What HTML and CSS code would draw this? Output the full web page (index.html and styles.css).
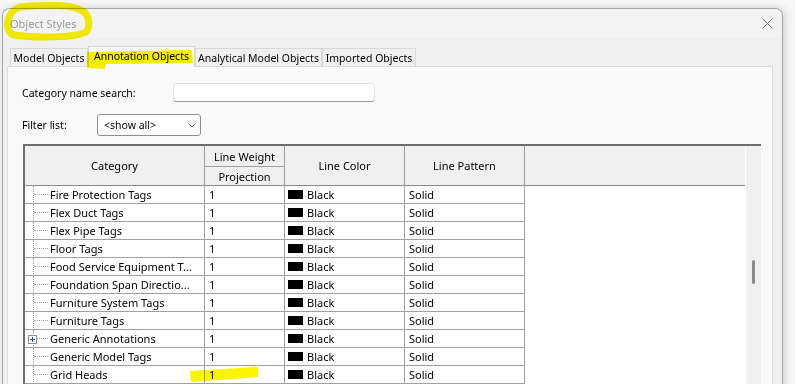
FILE: index.html
```html
<!DOCTYPE html>
<html>
<head>
<meta charset="utf-8">
<link rel="stylesheet" href="styles.css">
</head>
<body>
<div class="dialog">
  <div class="titlebar">
    <span class="title">Object Styles</span>
    <svg class="close" viewBox="0 0 11 11" width="11" height="11"><path d="M0.5 0.5 L10.5 10.5 M10.5 0.5 L0.5 10.5" stroke="#6a6a6a" stroke-width="1" fill="none"/></svg>
  </div>
  <div class="dbody">
    <div class="tabs">
      <div class="tab t1">Model Objects</div>
      <div class="tab t2 active">Annotation Objects</div>
      <div class="tab t3">Analytical Model Objects</div>
      <div class="tab t4">Imported Objects</div>
    </div>
    <div class="panel">
      <div class="frow search"><span class="lbl">Category name search:</span><div class="input"></div></div>
      <div class="frow filter"><span class="lbl">Filter list:</span>
        <div class="select"><span>&lt;show all&gt;</span><svg class="chev" viewBox="0 0 8 5" width="8" height="5"><path d="M0.5 0.5 L4 4 L7.5 0.5" stroke="#606060" fill="none" stroke-width="1"/></svg></div>
      </div>
      <div class="grid">
        <div class="gmain">
          <div class="ghead">
            <div class="hc cat">Category</div>
            <div class="hc lw">Line Weight</div>
            <div class="hc proj">Projection</div>
            <div class="hc col">Line Color</div>
            <div class="hc pat">Line Pattern</div>
            <div class="hc rest"></div>
          </div>
          <div class="row"><div class="c name">Fire Protection Tags</div><div class="c w">1</div><div class="c clr"><span class="sw"></span>Black</div><div class="c lp">Solid</div><div class="c e"></div></div>
          <div class="row"><div class="c name">Flex Duct Tags</div><div class="c w">1</div><div class="c clr"><span class="sw"></span>Black</div><div class="c lp">Solid</div><div class="c e"></div></div>
          <div class="row"><div class="c name">Flex Pipe Tags</div><div class="c w">1</div><div class="c clr"><span class="sw"></span>Black</div><div class="c lp">Solid</div><div class="c e"></div></div>
          <div class="row"><div class="c name">Floor Tags</div><div class="c w">1</div><div class="c clr"><span class="sw"></span>Black</div><div class="c lp">Solid</div><div class="c e"></div></div>
          <div class="row"><div class="c name">Food Service Equipment T...</div><div class="c w">1</div><div class="c clr"><span class="sw"></span>Black</div><div class="c lp">Solid</div><div class="c e"></div></div>
          <div class="row"><div class="c name">Foundation Span Directio...</div><div class="c w">1</div><div class="c clr"><span class="sw"></span>Black</div><div class="c lp">Solid</div><div class="c e"></div></div>
          <div class="row"><div class="c name">Furniture System Tags</div><div class="c w">1</div><div class="c clr"><span class="sw"></span>Black</div><div class="c lp">Solid</div><div class="c e"></div></div>
          <div class="row"><div class="c name">Furniture Tags</div><div class="c w">1</div><div class="c clr"><span class="sw"></span>Black</div><div class="c lp">Solid</div><div class="c e"></div></div>
          <div class="row"><div class="c name"><svg class="pb" viewBox="0 0 9 9" width="9" height="9"><rect x="0.5" y="0.5" width="8" height="8" fill="#fff" stroke="#919191"/><path d="M2 4.5 H7 M4.5 2 V7" stroke="#2b4f9e" stroke-width="1"/></svg>Generic Annotations</div><div class="c w">1</div><div class="c clr"><span class="sw"></span>Black</div><div class="c lp">Solid</div><div class="c e"></div></div>
          <div class="row"><div class="c name">Generic Model Tags</div><div class="c w">1</div><div class="c clr"><span class="sw"></span>Black</div><div class="c lp">Solid</div><div class="c e"></div></div>
          <div class="row"><div class="c name">Grid Heads</div><div class="c w">1</div><div class="c clr"><span class="sw"></span>Black</div><div class="c lp">Solid</div><div class="c e"></div></div>
        </div>
        <div class="vscroll"><div class="thumb"></div></div>
      </div>
    </div>
  </div>
</div>
<svg class="marks" viewBox="0 0 795 384" width="795" height="384">
  <path d="M20 7 C50 4 75 5 84 12 C90 17 90 28 86 32 C75 38 35 38 14 35 C4 33 5 12 20 7 Z" fill="none" stroke="#fbf300" stroke-width="7" stroke-linejoin="round"/>
  <path d="M87 52 L192 50 L193 63 L106 64 L105 69 L87 68 Z" fill="#fbf300"/>
  <path d="M190 371 L258 367 L258 377 L191 382 Z" fill="#fbf300"/>
</svg>
</body>
</html>
```
FILE: styles.css
```css
* { box-sizing: border-box; }
html, body { margin: 0; padding: 0; }
body {
  width: 795px;
  height: 384px;
  overflow: hidden;
  background: #f7f7f7;
  font-family: "Noto Sans", "Open Sans", sans-serif;
  font-size: 11px;
  color: #000;
  position: relative;
}
.dialog {
  margin: 8px 0 0 2px;
  width: 781px;
  height: 392px;
  border: 1px solid #a5a5a5;
  border-bottom: none;
  border-radius: 8px 8px 0 0;
  background: #f0f0f0;
  box-shadow: 2px 0 8px rgba(0, 0, 0, 0.16);
  overflow: hidden;
  display: flex;
  flex-direction: column;
}
.titlebar {
  height: 29px;
  flex: none;
  display: flex;
  align-items: center;
  justify-content: space-between;
  padding: 0 9px 0 7px;
  background: #f3f3f3;
}
.title { color: #9a9a9a; }
.close { display: block; }
.dbody {
  flex: 1;
  display: flex;
  flex-direction: column;
  padding: 8px 9px 0 4px;
}
.tabs {
  display: flex;
  align-items: flex-end;
  height: 20px;
  padding-left: 3px;
  flex: none;
  font-size: 10.5px;
}
.tab {
  height: 18px;
  border: 1px solid #d9d9d9;
  border-bottom: none;
  background: #f0f0f0;
  display: flex;
  align-items: center;
  justify-content: center;
  white-space: nowrap;
}
.tab.active {
  height: 21px;
  margin-bottom: -1px;
  background: #f9f9f9;
  border-color: #d6d6d6;
  position: relative;
  z-index: 1;
  padding-bottom: 2px;
}
.t1 { width: 78px; }
.t2 { width: 107px; }
.t3 { width: 127px; }
.t4 { width: 94px; }
.panel {
  flex: 1;
  background: #f9f9f9;
  border: 1px solid #dcdcdc;
  padding: 16px 0 0 14px;
  display: flex;
  flex-direction: column;
}
.frow { display: flex; align-items: center; flex: none; font-size: 10.5px; }
.search .lbl { width: 151px; }
.input {
  width: 202px;
  height: 19px;
  background: #fff;
  border: 1px solid #e3e3e3;
  border-bottom-color: #9c9c9c;
  border-radius: 3px;
}
.filter { margin-top: 12px; }
.filter .lbl { width: 75px; }
.select {
  width: 104px;
  height: 22px;
  background: #fff;
  border: 1px solid #8d8d8d;
  border-radius: 3px;
  display: flex;
  align-items: center;
  justify-content: space-between;
  padding: 0 4px 0 6px;
}
.chev { display: block; }
.grid {
  margin: 8px 0 0 1px;
  width: 738px;
  flex: 1;
  display: flex;
  border-top: 2px solid #6e6e6e;
  border-left: 2px solid #6e6e6e;
  background: #fff;
  font-size: 11px;
}
.gmain { width: 720px; flex: none; }
.vscroll {
  width: 16px;
  flex: none;
  background: #f0f0f0;
  border-left: 1px solid #fdfdfd;
  padding: 114px 0 0 6px;
}
.thumb { width: 3px; height: 24px; background: #8a8a8a; border-radius: 2px; }
.ghead {
  display: grid;
  grid-template-columns: 180px 80px 120px 120px 1fr;
  grid-template-rows: 21px 19px;
  background: #f0f0f0;
}
.hc {
  border-right: 1px solid #a0a0a0;
  border-bottom: 1px solid #8a8a8a;
  display: flex;
  align-items: center;
  justify-content: center;
  white-space: nowrap;
}
.cat { grid-column: 1; grid-row: 1 / 3; }
.lw { grid-column: 2; grid-row: 1; border-bottom-color: #a0a0a0; }
.proj { grid-column: 2; grid-row: 2; }
.col { grid-column: 3; grid-row: 1 / 3; }
.pat { grid-column: 4; grid-row: 1 / 3; }
.rest { grid-column: 5; grid-row: 1 / 3; border-right: none; }
.row {
  display: grid;
  grid-template-columns: 180px 80px 120px 120px 1fr;
  height: 18px;
}
.c {
  border-right: 1px solid #a0a0a0;
  border-bottom: 1px solid #a0a0a0;
  display: flex;
  align-items: center;
  line-height: 17px;
  white-space: nowrap;
  overflow: hidden;
}
.c.name { padding-left: 25px; position: relative; }
.c.name::before {
  content: "";
  position: absolute;
  left: 8px;
  top: 0;
  bottom: -1px;
  border-left: 1px dotted #a0a0a0;
}
.c.name::after {
  content: "";
  position: absolute;
  left: 9px;
  width: 14px;
  top: 8px;
  border-top: 1px dotted #a0a0a0;
}
.pb { position: absolute; left: 3px; top: 5px; z-index: 1; }
.c.w { padding-left: 4px; }
.c.clr { padding-left: 3px; }
.c.lp { padding-left: 4px; }
.c.e { border: none; }
.sw { width: 15px; height: 9px; background: #000; margin-right: 4px; flex: none; }
.marks {
  position: absolute;
  left: 0;
  top: 0;
  z-index: 10;
  pointer-events: none;
  mix-blend-mode: multiply;
}
```
